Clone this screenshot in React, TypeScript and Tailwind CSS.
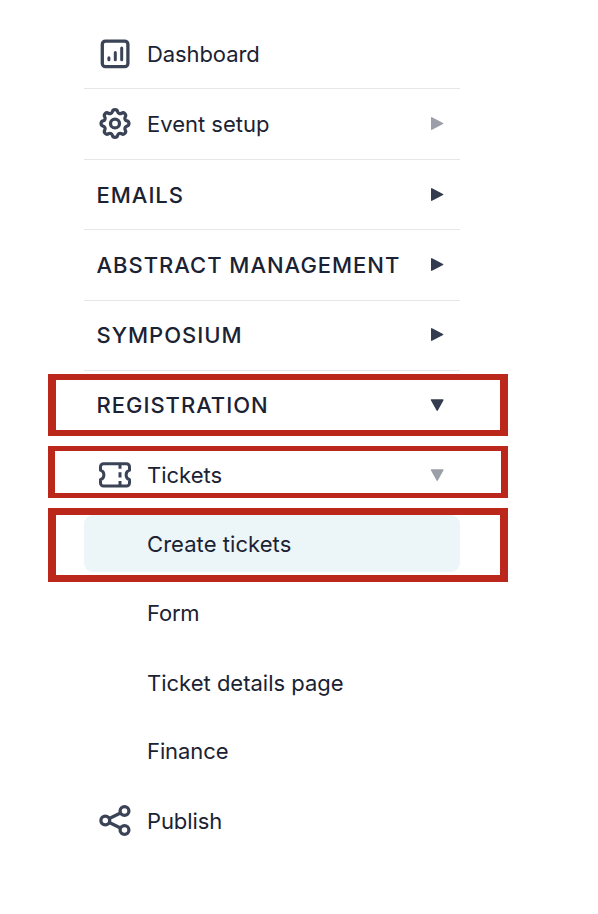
import React from "react";

const ink = "#3b4456";

const DashboardIcon = () => (
  <svg width="40" height="40" viewBox="0 0 40 40" fill="none" stroke={ink} strokeWidth="3.3" strokeLinecap="round">
    <rect x="7.3" y="7.1" width="25.6" height="25.6" rx="3.2" />
    <path d="M13.9 23.8v1.9M20.3 18.6v7.1M26.7 14v11.7" strokeWidth="3" />
  </svg>
);

const GearIcon = () => (
  <svg width="40" height="40" viewBox="0 0 40 40" fill="none" stroke={ink} strokeWidth="2.1" strokeLinejoin="round">
    <g transform="translate(1.4 .9) scale(1.55)">
      <path d="M10.325 4.317c.426-1.756 2.924-1.756 3.35 0a1.724 1.724 0 0 0 2.573 1.066c1.543-.94 3.31.826 2.37 2.37a1.724 1.724 0 0 0 1.065 2.572c1.756.426 1.756 2.924 0 3.35a1.724 1.724 0 0 0-1.066 2.573c.94 1.543-.826 3.31-2.37 2.37a1.724 1.724 0 0 0-2.572 1.065c-.426 1.756-2.924 1.756-3.35 0a1.724 1.724 0 0 0-2.573-1.066c-1.543.94-3.31-.826-2.37-2.37a1.724 1.724 0 0 0-1.065-2.572c-1.756-.426-1.756-2.924 0-3.35a1.724 1.724 0 0 0 1.066-2.573c-.94-1.543.826-3.31 2.37-2.37a1.724 1.724 0 0 0 2.572-1.065z" />
      <circle cx="12" cy="12" r="2.9" />
    </g>
  </svg>
);

const TicketIcon = () => (
  <svg width="40" height="40" viewBox="0 0 40 40" fill="none" stroke={ink} strokeWidth="3" strokeLinejoin="round">
    <path d="M8.5 8.7h23a3 3 0 0 1 3 3v3.5c-2.2.8-3.4 2.5-3.4 4.7s1.2 3.9 3.4 4.7v3.5a3 3 0 0 1-3 3h-23a3 3 0 0 1-3-3v-3.5c2.2-.8 3.4-2.5 3.4-4.7s-1.2-3.9-3.4-4.7v-3.5a3 3 0 0 1 3-3z" />
    <path d="M25 8.7v5M25 17.3v5.2M25 26v5" />
  </svg>
);

const ShareIcon = () => (
  <svg width="40" height="40" viewBox="0 0 40 40" fill="none" stroke={ink} strokeWidth="3.3">
    <circle cx="10.3" cy="19.5" r="4.4" />
    <circle cx="29.5" cy="10" r="4.4" />
    <circle cx="29.5" cy="29" r="4.4" />
    <path d="M14.3 17.5l11.2-5.5M14.3 21.5l11.2 5.5" />
  </svg>
);

const Arrow = ({ open = false, muted = false }) => (
  <svg width="16" height="16" viewBox="0 0 16 16" className={muted ? "text-[#9b9fa8]" : "text-[#343c4f]"}>
    <path
      d={open ? "M2.5 2.9h11.4L8.2 13.2z" : "M2.7 1.8v11.4L13.7 7.5z"}
      fill="currentColor"
      stroke="currentColor"
      strokeWidth="1.4"
      strokeLinejoin="round"
    />
  </svg>
);

const Heading = ({ label, open = false }: { label: string; open?: boolean }) => (
  <>
    <span className="grow font-medium tracking-[0.98px] whitespace-nowrap">{label}</span>
    <Arrow open={open} />
  </>
);

const App = () => {
  return (
    <div className="min-h-[914px] bg-white font-['Inter',sans-serif] text-[22px] leading-none text-[#1b2233]">
      <nav className="ml-12 w-[460px] pt-[19px]">
        <div className="mr-12 ml-9">
          <div className="flex h-[70px] items-center border-b border-[#e5e7ea] pl-[11px]">
            <DashboardIcon />
            <span className="ml-3 tracking-[-0.1px]">Dashboard</span>
          </div>
          <div className="flex h-[71px] items-center border-b border-[#e5e7ea] pr-[15px] pl-[11px]">
            <GearIcon />
            <span className="ml-3 grow">Event setup</span>
            <Arrow muted />
          </div>
          <div className="flex h-[70px] items-center border-b border-[#e5e7ea] pr-[15px] pl-[12.5px]">
            <Heading label="EMAILS" />
          </div>
          <div className="flex h-[71px] items-center border-b border-[#e5e7ea] pr-[15px] pl-[12.5px]">
            <Heading label="ABSTRACT MANAGEMENT" />
          </div>
          <div className="flex h-[70px] items-center border-b border-[#e5e7ea] pr-[15px] pb-0.5 pl-[12.5px]">
            <Heading label="SYMPOSIUM" />
          </div>
        </div>

        <div className="mt-[3px] flex h-[62px] items-center border-x-8 border-y-6 border-[#bb271a] pr-[55px] pl-[40.5px]">
          <Heading label="REGISTRATION" open />
        </div>
        <div className="mt-2.5 flex h-[52px] items-center border-x-[7px] border-y-5 border-[#bb271a] pt-[5px] pr-14 pl-10">
          <TicketIcon />
          <span className="ml-3 grow">Tickets</span>
          <Arrow open muted />
        </div>
        <div className="mt-2.5 h-[74px] border-x-8 border-y-7 border-[#bb271a] pr-10 pl-7">
          <div className="flex h-[57px] items-center rounded-[9px] bg-[#ecf5f7] pl-[63px] tracking-[0.06px]">
            Create tickets
          </div>
        </div>

        <div className="mr-12 ml-9 -mt-1">
          <div className="flex h-[69px] items-center pl-[63px] tracking-[-0.2px]">Form</div>
          <div className="flex h-[71px] items-center pl-[63px]">Ticket details page</div>
          <div className="flex h-[66px] items-center pl-[63px] tracking-[-0.1px]">Finance</div>
          <div className="flex h-[73px] items-center pl-[11px]">
            <ShareIcon />
            <span className="ml-3 tracking-[-0.1px]">Publish</span>
          </div>
        </div>
      </nav>
    </div>
  );
};

export default App;
